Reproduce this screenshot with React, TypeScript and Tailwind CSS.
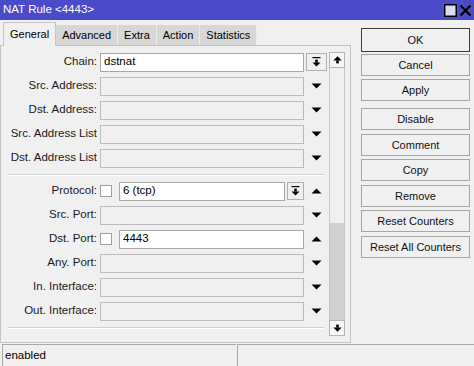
import React from "react";

const DownTri = () => (
  <svg width="11" height="6" viewBox="0 0 11 6">
    <polygon points="0.5,0.5 10.5,0.5 5.5,5.5" fill="#000" />
  </svg>
);
const UpTri = () => (
  <svg width="11" height="6" viewBox="0 0 11 6">
    <polygon points="0.5,5.5 10.5,5.5 5.5,0.5" fill="#000" />
  </svg>
);
const DropIcon = () => (
  <svg width="9" height="10" viewBox="0 0 9 10">
    <rect x="0.5" y="0" width="8" height="1.2" fill="#000" />
    <rect x="3.2" y="2.6" width="2.6" height="3" fill="#000" />
    <polygon points="0.5,5.4 8.5,5.4 4.5,9.6" fill="#000" />
  </svg>
);
const ScrollUp = () => (
  <svg width="9" height="8" viewBox="0 0 9 8">
    <polygon points="4.5,0.3 8.7,4.6 0.3,4.6" fill="#000" />
    <rect x="3.2" y="4.4" width="2.6" height="3" fill="#000" />
  </svg>
);
const ScrollDown = () => (
  <svg width="9" height="8" viewBox="0 0 9 8">
    <rect x="3.2" y="0.6" width="2.6" height="3" fill="#000" />
    <polygon points="0.3,3.4 8.7,3.4 4.5,7.7" fill="#000" />
  </svg>
);

function Row({ label, children }: { label: string; children: React.ReactNode }) {
  return (
    <div className="flex items-center h-[24px]">
      <div className="w-[96px] text-right whitespace-nowrap overflow-hidden text-[#1a1a1a]">{label}</div>
      <div className="ml-[3px] flex items-center">{children}</div>
    </div>
  );
}

function Field({ w, text, white }: { w: string; text?: string; white?: boolean }) {
  return (
    <div
      className={`${w} h-[19px] border flex items-center pl-[3px] whitespace-nowrap overflow-hidden ${
        white ? "bg-white border-[#a8a8a8]" : "bg-[#f0f0f0] border-[#bcbcbc]"
      }`}
    >
      {text}
    </div>
  );
}

function Slot({ children }: { children?: React.ReactNode }) {
  return <div className="ml-[2px] w-[21px] h-[19px] flex items-center justify-center">{children}</div>;
}

function DropBtn({ w }: { w: string }) {
  return (
    <div className={`${w} h-[18px] border border-[#b0b0b0] bg-[#f0f0f0] flex items-center justify-center`}>
      <DropIcon />
    </div>
  );
}

const Check = () => <div className="w-[12px] h-[12px] bg-white border border-[#a0a0a0]" />;

const Sep = () => <div className="ml-[7px] mr-[3px] border-t border-[#d0d0d0] border-b border-b-white" />;

function Btn({ label, cls, ok }: { label: string; cls: string; ok?: boolean }) {
  return (
    <div
      className={`${cls} w-[109px] flex items-center justify-center bg-[#f0f0f0] border text-[11px] text-[#111] ${
        ok ? "border-[#3c3c3c]" : "border-[#a6a6a6]"
      }`}
    >
      {label}
    </div>
  );
}

export default function App() {
  const tabs = ["Advanced", "Extra", "Action", "Statistics"];
  return (
    <div className="w-[474px] h-[366px] flex flex-col bg-[#f0f0f0] overflow-hidden font-['Liberation_Sans',Arial,sans-serif] text-[11.5px] text-black">
      {/* Title bar */}
      <div className="h-[20px] bg-[#4b4bc9] flex items-center pl-[3px] pr-[2px]">
        <span className="text-white text-[11.5px]">NAT Rule &lt;4443&gt;</span>
        <div className="ml-auto flex items-center gap-[2px]">
          <svg width="13" height="13" viewBox="0 0 13 13">
            <rect x="0.75" y="0.75" width="11.5" height="11.5" fill="#dcdcf0" stroke="#000" strokeWidth="1.5" />
          </svg>
          <svg width="13" height="13" viewBox="0 0 13 13">
            <path d="M1.5 1.5 L11.5 11.5 M11.5 1.5 L1.5 11.5" stroke="#000" strokeWidth="2.2" />
          </svg>
        </div>
      </div>

      <div className="flex flex-1">
        {/* Left column */}
        <div className="w-[351px] flex flex-col">
          <div className="h-[25px] pl-[3px] flex items-end relative z-10">
            <div className="h-[24px] -mb-px px-[6px] bg-[#f0f0f0] border border-b-0 border-[#c4c4c4] flex items-center text-[11px]">
              General
            </div>
            {tabs.map((t) => (
              <div
                key={t}
                className="h-[20px] px-[6px] bg-[#d7d7d7] border-r border-[#ececec] flex items-center text-[11px]"
              >
                {t}
              </div>
            ))}
          </div>
          <div className="flex-1 border border-[#c4c4c4] flex">
            <div className="w-[326px] pt-[4px] flex flex-col">
              <Row label="Chain:">
                <Field w="w-[204px]" text="dstnat" white />
                <div className="ml-[2px]">
                  <DropBtn w="w-[21px]" />
                </div>
              </Row>
              <Row label="Src. Address:">
                <Field w="w-[204px]" />
                <Slot>
                  <DownTri />
                </Slot>
              </Row>
              <Row label="Dst. Address:">
                <Field w="w-[204px]" />
                <Slot>
                  <DownTri />
                </Slot>
              </Row>
              <Row label="Src. Address List">
                <Field w="w-[204px]" />
                <Slot>
                  <DownTri />
                </Slot>
              </Row>
              <Row label="Dst. Address List">
                <Field w="w-[204px]" />
                <Slot>
                  <DownTri />
                </Slot>
              </Row>
              <div className="mt-[4px] mb-[3px]">
                <Sep />
              </div>
              <Row label="Protocol:">
                <Check />
                <div className="ml-[7px]">
                  <Field w="w-[166px]" text="6 (tcp)" white />
                </div>
                <div className="ml-[2px]">
                  <DropBtn w="w-[17px]" />
                </div>
                <Slot>
                  <UpTri />
                </Slot>
              </Row>
              <Row label="Src. Port:">
                <Field w="w-[204px]" />
                <Slot>
                  <DownTri />
                </Slot>
              </Row>
              <Row label="Dst. Port:">
                <Check />
                <div className="ml-[7px]">
                  <Field w="w-[185px]" text="4443" white />
                </div>
                <Slot>
                  <UpTri />
                </Slot>
              </Row>
              <Row label="Any. Port:">
                <Field w="w-[204px]" />
                <Slot>
                  <DownTri />
                </Slot>
              </Row>
              <Row label="In. Interface:">
                <Field w="w-[204px]" />
                <Slot>
                  <DownTri />
                </Slot>
              </Row>
              <Row label="Out. Interface:">
                <Field w="w-[204px]" />
                <Slot>
                  <DownTri />
                </Slot>
              </Row>
              <div className="mt-[4px]">
                <Sep />
              </div>
            </div>
            {/* Scrollbar */}
            <div className="ml-[2px] mt-[6px] w-[16px] h-[284px] flex flex-col">
              <div className="h-[16px] border border-[#b4b4b4] bg-[#f6f6f6] flex items-center justify-center">
                <ScrollUp />
              </div>
              <div className="flex-1 border-x border-[#c8c8c8] bg-[#f0f0f0] flex flex-col justify-end">
                <div className="h-[97px] bg-[#d0d0d0]" />
              </div>
              <div className="h-[16px] border border-[#b4b4b4] bg-[#f6f6f6] flex items-center justify-center">
                <ScrollDown />
              </div>
            </div>
          </div>
        </div>

        {/* Right buttons */}
        <div className="ml-[10px] pt-[8px] flex flex-col">
          <Btn label="OK" cls="h-[24px]" ok />
          <Btn label="Cancel" cls="h-[22px] mt-[2px]" />
          <Btn label="Apply" cls="h-[22px] mt-[3px]" />
          <Btn label="Disable" cls="h-[22px] mt-[7px]" />
          <Btn label="Comment" cls="h-[22px] mt-[4px]" />
          <Btn label="Copy" cls="h-[22px] mt-[3px]" />
          <Btn label="Remove" cls="h-[22px] mt-[4px]" />
          <Btn label="Reset Counters" cls="h-[22px] mt-[3px]" />
          <Btn label="Reset All Counters" cls="h-[22px] mt-[4px]" />
        </div>
      </div>

      {/* Status bar */}
      <div className="h-[23px] flex pl-[2px] pt-[1px] gap-[1px]">
        <div className="w-[234px] border-l border-t border-[#a8a8a8] flex items-center pl-[2px]">enabled</div>
        <div className="flex-1 border-l border-t border-[#a8a8a8]" />
      </div>
    </div>
  );
}
